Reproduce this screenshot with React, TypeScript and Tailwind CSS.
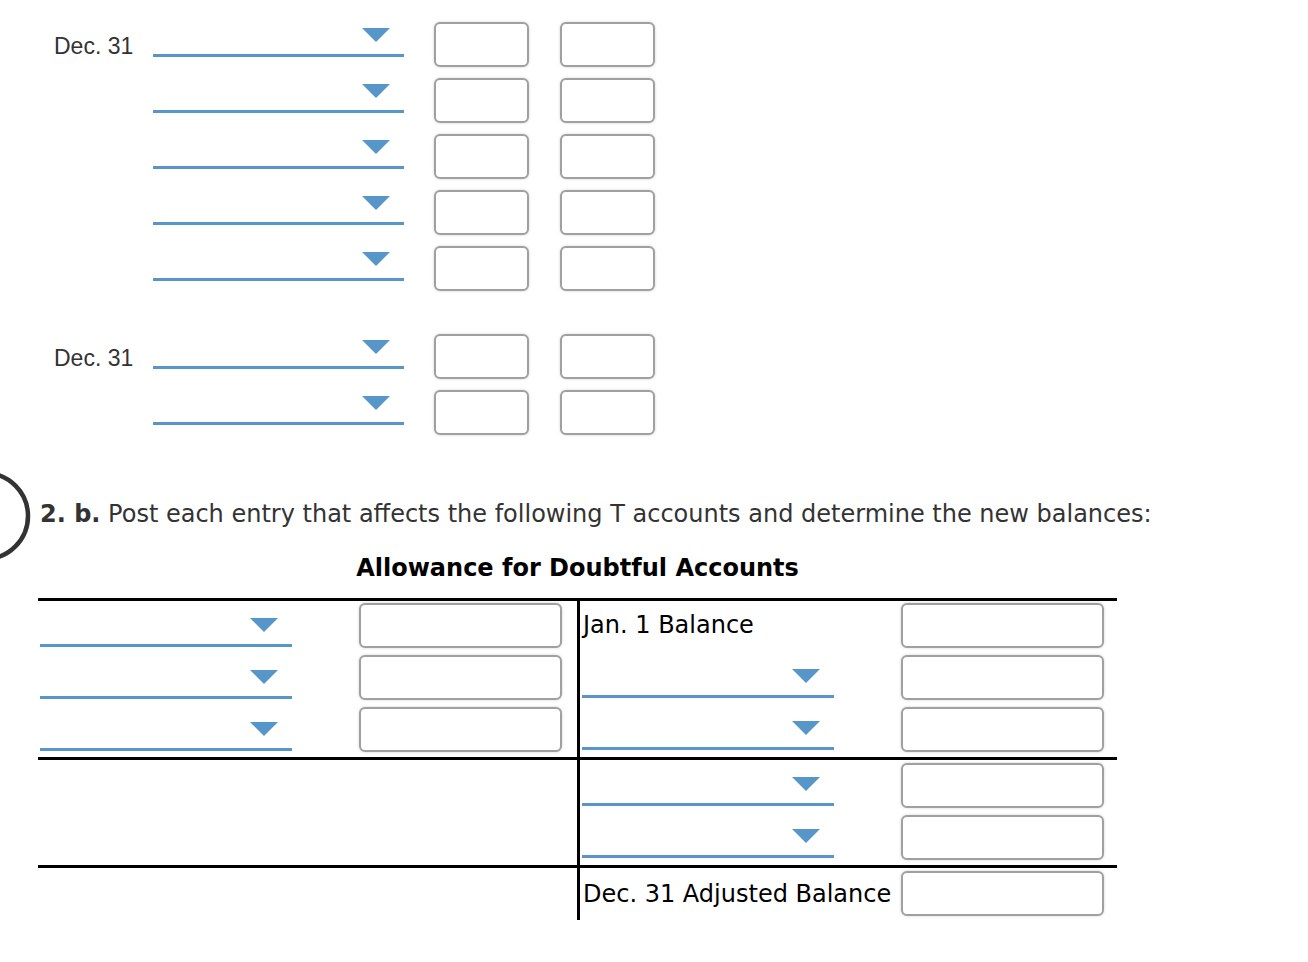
const font = { fontFamily: '"DejaVu Sans", Verdana, sans-serif' }
const labelFont = { fontFamily: '"Liberation Sans", Arial, sans-serif' }

function Caret() {
  return (
    <svg width="28" height="14" viewBox="0 0 28 14" className="block">
      <polygon points="0,0 28,0 14,14" fill="#5796c8" />
    </svg>
  )
}

function Dropdown({ className = '' }: { className?: string }) {
  return (
    <div className={`relative w-[252px] shrink-0 border-b-[3px] border-[#5796c8] ${className}`}>
      <div className="absolute right-[14px] bottom-[12px]">
        <Caret />
      </div>
    </div>
  )
}

function Box({ w }: { w: string }) {
  return (
    <div className={`${w} h-[45px] shrink-0 rounded-[6px] border-2 border-[#a0a0a0] bg-white shadow-[0_0_3px_rgba(0,0,0,0.18)]`} />
  )
}

function JournalRow({ label }: { label?: string }) {
  return (
    <div className="flex items-start h-[45px]">
      <div
        className="w-[153px] shrink-0 pl-[54px] pt-[10px] text-[23px] leading-[28px] text-[#333] whitespace-nowrap"
        style={labelFont}
      >
        {label}
      </div>
      <Dropdown className="h-[35px] !w-[251px]" />
      <div className="ml-[30px]">
        <Box w="w-[95px]" />
      </div>
      <div className="ml-[31px]">
        <Box w="w-[95px]" />
      </div>
    </div>
  )
}

function LeftRow() {
  return (
    <div className="flex items-start h-[45px]">
      <Dropdown className="ml-[2px] h-[44px]" />
      <div className="ml-[67px]">
        <Box w="w-[203px]" />
      </div>
    </div>
  )
}

function RightRow({ label }: { label?: string }) {
  return (
    <div className="flex items-start h-[45px]">
      {label ? (
        <div className="ml-[3px] w-[318px] pt-[8px] text-[24px] leading-[28px] text-black whitespace-nowrap">{label}</div>
      ) : (
        <Dropdown className="ml-[2px] h-[43px] !mr-[67px]" />
      )}
      <Box w="w-[203px]" />
    </div>
  )
}

export default function App() {
  return (
    <div className="w-[1308px] h-[962px] bg-white overflow-hidden" style={font}>
      <div className="pt-[22px] flex flex-col gap-[11px]">
        <JournalRow label="Dec. 31" />
        <JournalRow />
        <JournalRow />
        <JournalRow />
        <JournalRow />
      </div>
      <div className="mt-[43px] flex flex-col gap-[11px]">
        <JournalRow label="Dec. 31" />
        <JournalRow />
      </div>

      <div className="relative mt-[65px] pl-[40px] text-[24px] leading-[28px] text-[#333] whitespace-nowrap">
        <svg width="34" height="92" viewBox="0 0 34 92" className="absolute left-0 top-[-29px]">
          <circle cx="-15" cy="45" r="43" fill="none" stroke="#333" strokeWidth="4.5" />
        </svg>
        <span className="font-bold">2. b.</span> Post each entry that affects the following T accounts and determine the new balances:
      </div>

      <div className="ml-[38px] w-[1079px]">
        <div className="mt-[26px] text-center text-[24px] leading-[28px] font-bold text-black">
          Allowance for Doubtful Accounts
        </div>
        <div className="mt-[16px] border-t-[3px] border-black">
          <div className="flex">
            <div className="w-[542px] border-r-[3px] border-black pt-[2px] pb-[5px] flex flex-col gap-[7px]">
              <LeftRow />
              <LeftRow />
              <LeftRow />
            </div>
            <div className="flex-1 pt-[2px] pb-[5px] flex flex-col gap-[7px]">
              <RightRow label="Jan. 1 Balance" />
              <RightRow />
              <RightRow />
            </div>
          </div>
          <div className="flex border-t-[3px] border-black">
            <div className="w-[542px] border-r-[3px] border-black" />
            <div className="flex-1 pt-[3px] pb-[5px] flex flex-col gap-[7px]">
              <RightRow />
              <RightRow />
            </div>
          </div>
          <div className="flex border-t-[3px] border-black">
            <div className="w-[542px] border-r-[3px] border-black" />
            <div className="flex-1 pt-[3px] pb-[4px]">
              <div className="flex items-center h-[45px]">
                <div className="ml-[3px] w-[318px] text-[24px] leading-[28px] text-black whitespace-nowrap">
                  Dec. 31 Adjusted Balance
                </div>
                <Box w="w-[203px]" />
              </div>
            </div>
          </div>
        </div>
      </div>
    </div>
  )
}
